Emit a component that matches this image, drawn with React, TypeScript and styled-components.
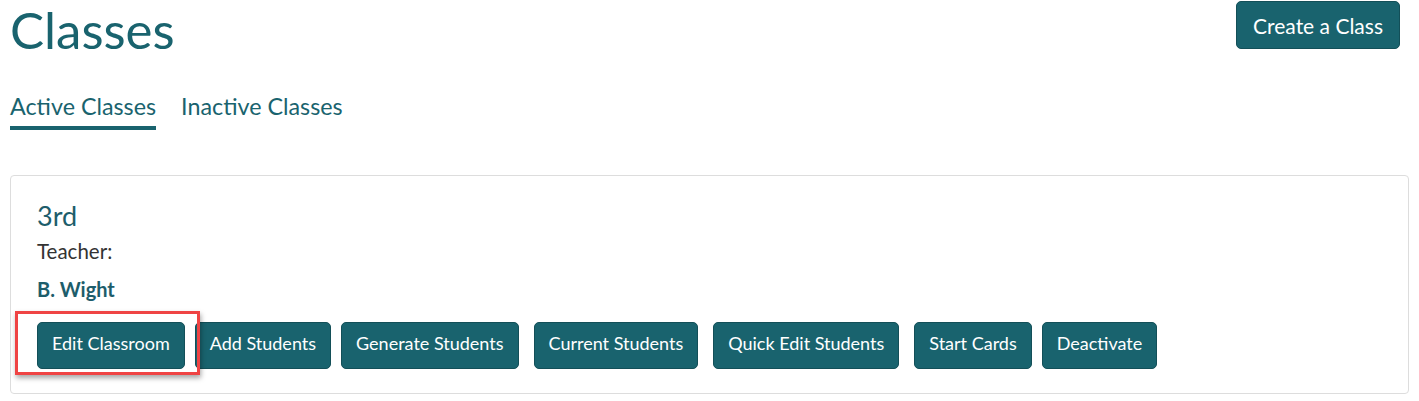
import React from 'react';
import styled, { createGlobalStyle } from 'styled-components';

const teal = '#19636e';

const GlobalStyle = createGlobalStyle`
  body {
    margin: 0;
    background: #fff;
    font-family: Lato, "Open Sans", sans-serif;
  }
`;

const Page = styled.main`
  padding: 0 10px;
`;

const Header = styled.header`
  display: flex;
  justify-content: space-between;
  align-items: flex-start;
  padding-right: 9px;
`;

const Title = styled.h1`
  margin: 0;
  font-size: 51px;
  font-weight: 400;
  line-height: 60px;
  color: ${teal};
`;

const Button = styled.button<{ $large?: boolean; $gap?: number }>`
  display: inline-flex;
  align-items: center;
  justify-content: center;
  height: ${({ $large }) => ($large ? 48 : 47)}px;
  padding: ${({ $large }) => ($large ? '0 16px' : '0 14px 5px')};
  margin-top: ${({ $large }) => ($large ? 1 : 0)}px;
  margin-right: ${({ $gap }) => $gap ?? 0}px;
  border: 1px solid #134f58;
  border-radius: 5px;
  background: ${teal};
  color: #fff;
  font-family: Lato, sans-serif;
  font-size: ${({ $large }) => ($large ? 21 : 18)}px;
  white-space: nowrap;
  cursor: pointer;
`;

const Tabs = styled.nav`
  display: flex;
  gap: 25px;
  margin-top: 32px;
`;

const Tab = styled.a<{ $active?: boolean }>`
  font-size: 23.3px;
  line-height: 28px;
  color: ${teal};
  padding-bottom: 6px;
  border-bottom: 4px solid ${({ $active }) => ($active ? teal : 'transparent')};
  text-decoration: none;
`;

const Card = styled.section`
  margin-top: 45px;
  border: 1px solid #dddddd;
  border-radius: 4px;
  padding: 24px 26px 24px;
`;

const ClassName = styled.h2`
  margin: 0;
  font-size: 27px;
  font-weight: 400;
  line-height: 32px;
  color: #1d5d6b;
`;

const Label = styled.div`
  margin-top: 7px;
  font-size: 20.5px;
  line-height: 24px;
  color: #333;
`;

const TeacherName = styled.div`
  margin-top: 14px;
  font-size: 20px;
  line-height: 24px;
  font-weight: 700;
  color: #1d5d6b;
`;

const Actions = styled.div`
  display: flex;
  flex-wrap: wrap;
  margin-top: 21px;
`;

const Highlight = styled.span`
  position: relative;
  display: inline-flex;
  margin-right: 10px;

  &::after {
    content: '';
    position: absolute;
    left: -22px;
    top: -11px;
    right: -15px;
    bottom: -6px;
    border: 3px solid #ef4444;
    box-shadow: 1px 3px 5px rgba(0, 0, 0, 0.35);
    pointer-events: none;
  }
`;

const actions: [string, number][] = [
  ['Add Students', 10],
  ['Generate Students', 15],
  ['Current Students', 15],
  ['Quick Edit Students', 15],
  ['Start Cards', 10],
  ['Deactivate', 0],
];

export default function App() {
  return (
    <>
      <GlobalStyle />
      <Page>
        <Header>
          <Title>Classes</Title>
          <Button $large>Create a Class</Button>
        </Header>
        <Tabs>
          <Tab $active>Active Classes</Tab>
          <Tab>Inactive Classes</Tab>
        </Tabs>
        <Card>
          <ClassName>3rd</ClassName>
          <Label>Teacher:</Label>
          <TeacherName>B. Wight</TeacherName>
          <Actions>
            <Highlight>
              <Button>Edit Classroom</Button>
            </Highlight>
            {actions.map(([label, gap]) => (
              <Button key={label} $gap={gap}>
                {label}
              </Button>
            ))}
          </Actions>
        </Card>
      </Page>
    </>
  );
}
